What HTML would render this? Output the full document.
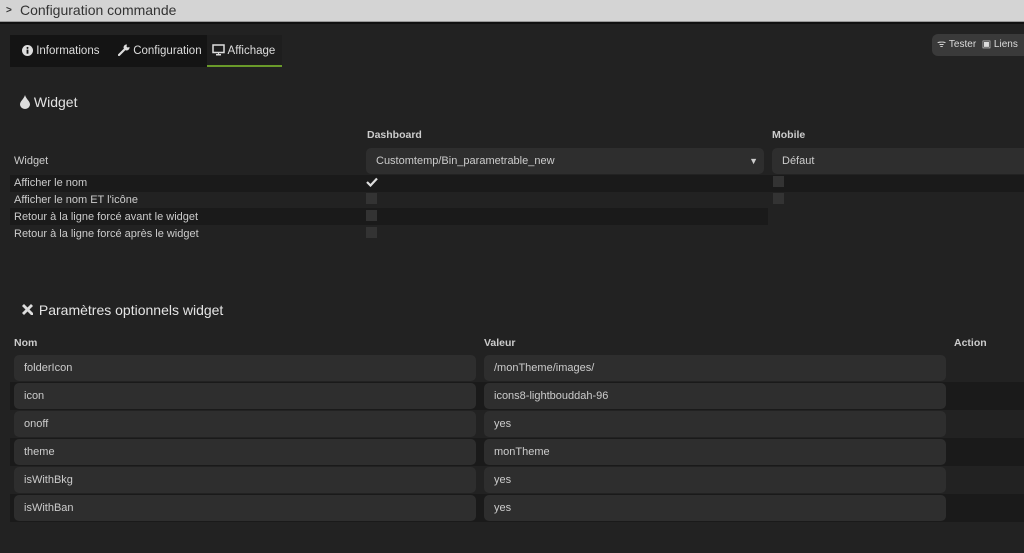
<!DOCTYPE html>
<html><head><meta charset="utf-8"><style>
*{margin:0;padding:0;box-sizing:border-box}
body{width:1024px;height:553px;overflow:hidden;background:#222;font-family:"Liberation Sans",Arial,sans-serif;color:#ccc;font-size:11px;position:relative}
.a{position:absolute}
svg{vertical-align:-2px}
.top{left:0;top:0;width:1024px;height:22px;background:#d4d4d4;border-bottom:1px solid #999;color:#333;font-size:14px;line-height:21px;padding-left:20px}
.line{left:0;top:22px;width:1024px;height:2px;background:#111}
.tabs{left:10px;top:35px;width:272px;height:32px;background:#141414}
.tab{top:35px;height:32px;line-height:32px;color:#ddd;font-size:11.5px}
.act{left:207px;width:75px;background:#1e1e1e;border-bottom:2px solid #6a9a2a}
.btns{left:932px;top:34px;width:100px;height:22px;background:#3a3a3a;border-radius:6px;font-size:10px;color:#ddd;line-height:22px;padding-left:5px}
h2{position:absolute;font-weight:normal;font-size:14px;color:#e4e4e4}
.lbl{left:14px;color:#ccc}
.hd{font-weight:bold;color:#ccc;font-size:10.5px}
.inp{background:#2e2e2e;border-radius:5px;height:26px;line-height:26px;padding-left:10px;color:#ccc}
.stripe{background:#1a1a1a}
.cb{width:11px;height:11px;background:#333}
</style></head><body>
<div class="a top"><span style="position:absolute;left:6px;font-size:10px;font-weight:bold">&gt;</span>Configuration commande</div>
<div class="a line"></div>
<div class="a tabs"></div>
<div class="a tab" style="left:22px"><svg width="11" height="11" viewBox="0 0 12 12"><circle cx="6" cy="6" r="6" fill="#ddd"/><rect x="5" y="5" width="2" height="4.5" fill="#141414"/><circle cx="6" cy="3.2" r="1.1" fill="#141414"/></svg> Informations</div>
<div class="a tab" style="left:118px"><svg width="12" height="12" viewBox="0 0 12 12"><path d="M1 11 L6 6" stroke="#ddd" stroke-width="2.2" stroke-linecap="round"/><path d="M9 0.5 A3 3 0 1 0 11.5 3 L9.5 3.5 L8.5 2.5 Z" fill="#ddd"/></svg> Configuration</div>
<div class="a tab act" style="padding-left:5px"><svg width="13" height="12" viewBox="0 0 13 12"><rect x="1" y="1" width="11" height="7.5" fill="none" stroke="#ddd" stroke-width="1.5"/><rect x="4" y="10" width="5" height="1.5" fill="#ddd"/><rect x="6" y="8.5" width="1" height="2" fill="#ddd"/></svg> Affichage</div>
<div class="a btns"><b style="font-weight:normal">ᯤ</b> Tester &nbsp;▣ Liens</div>
<h2 style="left:20px;top:94px"><svg width="10" height="14" viewBox="0 0 10 14"><path d="M5 0 C6 4 10 6 10 9.5 A5 4.5 0 0 1 0 9.5 C0 6 4 4 5 0Z" fill="#ddd"/></svg> Widget</h2>
<div class="a hd" style="left:367px;top:129px">Dashboard</div>
<div class="a hd" style="left:772px;top:129px">Mobile</div>
<div class="a lbl" style="top:155px">Widget</div>
<div class="a inp" style="left:366px;top:148px;width:398px">Customtemp/Bin_parametrable_new<span style="position:absolute;right:6px;top:0;font-size:9px">▼</span></div>
<div class="a inp" style="left:772px;top:148px;width:260px">Défaut</div>
<div class="a stripe" style="left:10px;top:175px;width:1014px;height:17px"></div>
<div class="a stripe" style="left:10px;top:208px;width:758px;height:17px"></div>
<div class="a lbl" style="top:177px">Afficher le nom</div>
<div class="a lbl" style="top:194px">Afficher le nom ET l'icône</div>
<div class="a lbl" style="top:211px">Retour à la ligne forcé avant le widget</div>
<div class="a lbl" style="top:228px">Retour à la ligne forcé après le widget</div>
<div class="a" style="left:366px;top:176px"><svg width="12" height="10" viewBox="0 0 12 10"><path d="M1 5 L4.5 8.5 L11 1.5" fill="none" stroke="#ddd" stroke-width="2.2"/></svg></div>
<div class="a cb" style="left:366px;top:193px"></div>
<div class="a cb" style="left:366px;top:210px"></div>
<div class="a cb" style="left:366px;top:227px"></div>
<div class="a cb" style="left:773px;top:176px"></div>
<div class="a cb" style="left:773px;top:193px"></div>
<h2 style="left:20px;top:302px"><svg width="15" height="15" viewBox="0 0 15 15"><path d="M2 4 L4 2 L13 11 L13 13 L11 13 Z" fill="#ddd"/><path d="M2 11 L11 2 L13 4 L4 13 Z" fill="#ddd"/></svg> Paramètres optionnels widget</h2>
<div class="a hd" style="left:14px;top:337px">Nom</div>
<div class="a hd" style="left:484px;top:337px">Valeur</div>
<div class="a hd" style="left:954px;top:337px">Action</div>
<div class="a stripe" style="left:10px;top:382px;width:1014px;height:28px"></div>
<div class="a stripe" style="left:10px;top:438px;width:1014px;height:28px"></div>
<div class="a stripe" style="left:10px;top:494px;width:1014px;height:28px"></div>
<div class="a inp" style="left:14px;top:355px;width:462px">folderIcon</div>
<div class="a inp" style="left:484px;top:355px;width:462px">/monTheme/images/</div>
<div class="a inp" style="left:14px;top:383px;width:462px">icon</div>
<div class="a inp" style="left:484px;top:383px;width:462px">icons8-lightbouddah-96</div>
<div class="a inp" style="left:14px;top:411px;width:462px">onoff</div>
<div class="a inp" style="left:484px;top:411px;width:462px">yes</div>
<div class="a inp" style="left:14px;top:439px;width:462px">theme</div>
<div class="a inp" style="left:484px;top:439px;width:462px">monTheme</div>
<div class="a inp" style="left:14px;top:467px;width:462px">isWithBkg</div>
<div class="a inp" style="left:484px;top:467px;width:462px">yes</div>
<div class="a inp" style="left:14px;top:495px;width:462px">isWithBan</div>
<div class="a inp" style="left:484px;top:495px;width:462px">yes</div>
</body></html>
